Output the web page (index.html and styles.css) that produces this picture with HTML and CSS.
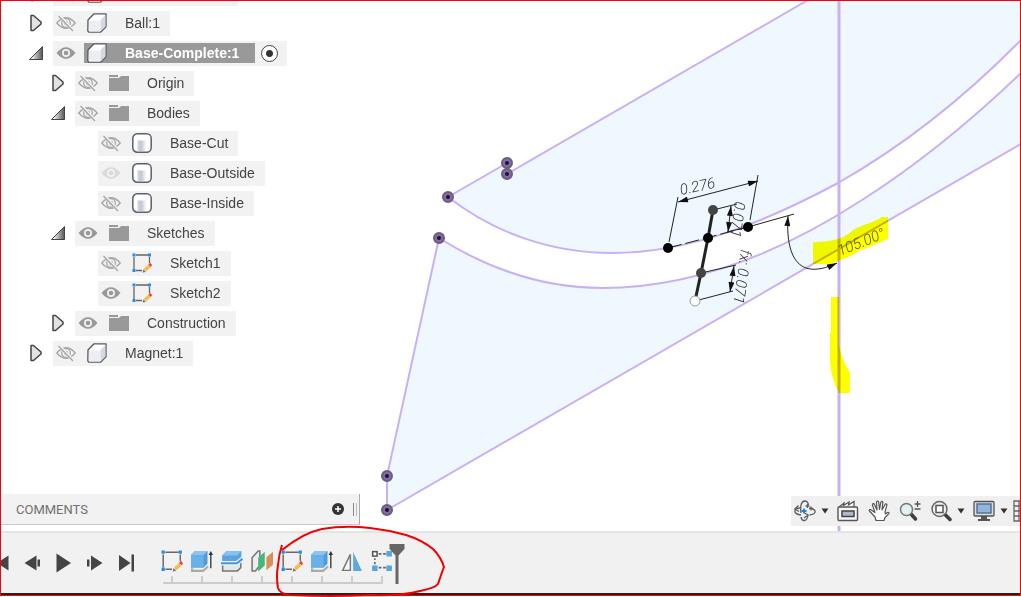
FILE: index.html
```html
<!DOCTYPE html>
<html lang="en">
<head>
    <meta charset="UTF-8">
    <meta name="viewport" content="width=device-width, initial-scale=1.0">
    <title>Base-Complete</title>
    <link rel="stylesheet" href="styles.css">
</head>
<body>
    <!-- Icon library -->
    <svg class="icon-defs" aria-hidden="true">
        <defs>
            <linearGradient id="gradArrow" x1="0" y1="0" x2="1" y2="0">
                <stop offset="0.2" stop-color="#eeeeee"/>
                <stop offset="1" stop-color="#555555"/>
            </linearGradient>
            <linearGradient id="gradBody" x1="0" y1="0" x2="1" y2="0">
                <stop offset="0" stop-color="#d4d7de"/>
                <stop offset="0.4" stop-color="#c2c6d0"/>
                <stop offset="1" stop-color="#ffffff"/>
            </linearGradient>
            <marker id="arrow" viewBox="0 0 10 6" refX="10" refY="3" markerWidth="11" markerHeight="6" markerUnits="userSpaceOnUse" orient="auto-start-reverse">
                <path d="M0 0L10 3L0 6z"/>
            </marker>
        </defs>
        <symbol id="closed" viewBox="0 0 20 20">
            <path d="M5 2.5h2.5l7.500 6.500v2l-7.500 6.500H5z" fill="#e2e2e2" stroke="#444" stroke-width="1.500" stroke-linejoin="round"/>
        </symbol>
        <symbol id="open" viewBox="0 0 20 20">
            <path d="M3.500 16.500L16.500 3.500v13z" fill="url(#gradArrow)" stroke="#444" stroke-linejoin="round"/>
        </symbol>
        <symbol id="eye" viewBox="0 0 20 20">
            <path d="M.5 10Q10-1.500 19.500 10Q10 21.500.5 10z" fill="currentColor"/>
            <circle cx="10" cy="10" r="4" fill="#f2f2f2"/>
            <circle cx="10" cy="10" r="2.300" fill="currentColor"/>
        </symbol>
        <symbol id="eye-off" viewBox="0 0 20 20">
            <g fill="none" stroke="#a6a6a6" stroke-width="1.300">
                <path d="M.8 10Q10-.5 19.200 10Q10 20.500.8 10z"/>
                <circle cx="10" cy="10" r="4.300"/>
                <circle cx="10" cy="10" r="1.500"/>
                <path d="M3.500 3L17.500 18" stroke="#f2f2f2" stroke-width="3"/>
                <path d="M2.500 3L17 18"/>
            </g>
        </symbol>
        <symbol id="cube" viewBox="0 0 20 20">
            <path d="M1 7L7 .8h12v13L13.500 19.200H2L.8 18z" fill="#fff" stroke="#555a64" stroke-width="1.300" stroke-linejoin="round"/>
            <path d="M13.500 7L18.300 2v11.500l-4.800 5z" fill="#d6d8df"/>
            <path d="M2 7.500h11v11H2z" fill="#eceef3"/>
        </symbol>
        <symbol id="body" viewBox="0 0 20 20">
            <rect x=".8" y=".8" width="18.400" height="18.400" rx="4.500" fill="#fff" stroke="#5a6070" stroke-width="1.500"/>
            <path d="M5.500 7q4.500 1 9 0v11h-9z" fill="url(#gradBody)"/>
        </symbol>
        <symbol id="folder" viewBox="0 0 20 20">
            <path d="M0 2h9v2H0zM0 5h10l2-2h8v15H0z" fill="#999"/>
        </symbol>
        <symbol id="sketch" viewBox="0 0 20 20">
            <path d="M4 2h12M2 4v12M17.500 4v6M4 17.500h6" fill="none" stroke="#666" stroke-width="1.300"/>
            <path d="M.5.5h3v3h-3zM16 .5h3v3h-3zM.5 16h3v3h-3z" fill="#1f8fe5"/>
            <path d="M10.500 19.500l1-3.200 2.400 2.600z" fill="#777"/>
            <path d="M11.800 15.800l4.500-4 2.300 2.500-4.500 4.200z" fill="#f6bd4b"/>
            <path d="M16.800 11.500l1.400-1.300 1.600 2.100-1.200 1.300z" fill="#ee3b3b" stroke="#ee3b3b" stroke-width=".7"/>
        </symbol>
        <symbol id="extrude" viewBox="0 0 20 20">
            <path d="M1 16.500V19h10l4.500-4" fill="none" stroke="#aaa" stroke-width="2"/>
            <path d="M0 4.500L3.500 1H15v11.500l-3.500 3.500H0z" fill="#4f9cd8"/>
            <path d="M0 4.500h11.500V16H0z" fill="#69b1e8"/>
            <path d="M0 4.500L3.500 1H15l-3.500 3.500z" fill="#8cc6f0"/>
            <path d="M18 3v13.500" stroke="#444" stroke-width="1.300"/>
            <path d="M16 4.500l2-3.500 2 3.500z" fill="#333"/>
        </symbol>
        <symbol id="split" viewBox="0 0 20 20">
            <path d="M1.500 13v6h13.500l3-3v-5" fill="#e7e7e7" stroke="#777" stroke-width="1.400"/>
            <path d="M1 5l4-4h13.500v6L15 10H1z" fill="#5aa5dd"/>
            <path d="M1 5l4-4h13.500L14.500 5z" fill="#87c2ee"/>
            <path d="M0 12h14.500l5-4" fill="none" stroke="#f1f1f1" stroke-width="4"/>
            <path d="M0 12h14.500l5-4" fill="none" stroke="#3f97da" stroke-width="1.800"/>
        </symbol>
        <symbol id="plane" viewBox="0 0 20 20">
            <path d="M1 7l5.500-6H8v13l-4 5H1z" fill="#eee" stroke="#777" stroke-width="1.400"/>
            <path d="M6.500 7l6-5.500V14l-6 5.500z" fill="#45b878"/>
            <path d="M14 6.500l6-5V13.500l-6 5z" fill="#dc8e59"/>
        </symbol>
        <symbol id="mirror" viewBox="0 0 20 20">
            <path d="M8.500 4v14.500H1.500z" fill="#f7f7f7" stroke="#777" stroke-width="1.300"/>
            <path d="M11 1.500L19 19h-8z" fill="#5da9df"/>
        </symbol>
        <symbol id="pattern" viewBox="0 0 20 20">
            <path d="M7 3.500h2.500M11 3.500h2.500M3.500 7.500V9M3.500 11v2M7 16h2.500M11 16h2.500" stroke="#666" stroke-width="1.500" fill="none"/>
            <rect x="1.500" y="1.500" width="4" height="4" fill="#fff" stroke="#555" stroke-width="1.400"/>
            <path d="M14 1h5v5h-5zM1 14h5v5H1zM14 14h5v5h-5z" fill="#55a6df"/>
        </symbol>
        <symbol id="orbit" viewBox="0 0 22 22">
            <g fill="none" stroke="#5a5f66" stroke-width="1.300">
                <path d="M7 15C-1 14-1 8 6 8M15.500 8c8 1.500 7 6 0 7"/>
                <path d="M7 13C6 5 7.500 1 11 1c2 0 3 1.500 3.500 4M14 15c-1 7-6 7-7 2"/>
                <path d="M11.500 6h4M13.500 4v4M15 8.500h4M17 6.500v4M4.500 5.500L1 9l4 2.500M10 12.500l4 2.500-4 3"/>
            </g>
            <path d="M7.500 11h5M10 8.500v5" stroke="#1684e2" stroke-width="1.800"/>
        </symbol>
        <symbol id="look" viewBox="0 0 22 22">
            <path d="M2 7L7 3l-.5 2.500L12 2l-.5 3L17 1.500V7" fill="#fff" stroke="#555" stroke-width="1.300"/>
            <rect x="1" y="7" width="19.500" height="13.500" rx="1" fill="#f7f7f7" stroke="#555" stroke-width="1.400"/>
            <rect x="5" y="11" width="12" height="5.500" fill="#aeb8c7" stroke="#444" stroke-width="1.500"/>
        </symbol>
        <symbol id="hand" viewBox="0 0 22 22">
            <path d="M8 20.500L7 17 1.500 11c-.8-1.300.8-2 1.800-1L7 12.500 4.500 5C4.300 3.500 6 3 6.500 4.500L9 10 8.500 2.500c0-1.800 2-1.800 2.200 0l.8 7 1.300-7c.3-1.600 2.200-1.300 2 .3L14 10l3-5.500c.7-1.300 2.300-.5 1.800.8L17 12l.5 2 2-1.500c1-.6 2 .3 1.200 1.300L17 17.500l-1 3z" fill="#fff" stroke="#555" stroke-width="1.200" stroke-linejoin="round"/>
        </symbol>
        <symbol id="zoom" viewBox="0 0 22 22">
            <path d="M12 14l4.500 5" stroke="#3c3f44" stroke-width="3.500" stroke-linecap="round"/>
            <circle cx="7.500" cy="9.500" r="6" fill="#e3f1f2" stroke="#777" stroke-width="1.500"/>
            <path d="M15.500 4h6M18.500 1v6M15.500 9h6" stroke="#555" stroke-width="1.300"/>
        </symbol>
        <symbol id="zoom-window" viewBox="0 0 22 22">
            <path d="M15 14.500l5 5" stroke="#3c3f44" stroke-width="3.500" stroke-linecap="round"/>
            <circle cx="9.500" cy="9" r="7.500" fill="#eee" stroke="#666" stroke-width="1.500"/>
            <rect x="6" y="5.500" width="7" height="7" fill="#fff" stroke="#555" stroke-width="1.500"/>
        </symbol>
        <symbol id="display" viewBox="0 0 22 22">
            <path d="M8 16h6v3h3v2H5v-2h3z" fill="#555"/>
            <rect x="1" y="1.500" width="20" height="14.500" rx="1" fill="#ddd" stroke="#555" stroke-width="1.300"/>
            <rect x="4" y="4" width="14" height="9" fill="#91b5dd" stroke="#4f6c97" stroke-width="1.400"/>
        </symbol>
        <symbol id="grid" viewBox="0 0 22 22">
            <path d="M1 1h20v20H1zM1 6h20M1 11h20M1 16h20M6 1v20M11 1v20M16 1v20" fill="none" stroke="#666" stroke-width="1.300"/>
        </symbol>
        <symbol id="caret" viewBox="0 0 8 6">
            <path d="M.5.5h7L4 5.500z" fill="#333"/>
        </symbol>
        <symbol id="first" viewBox="0 0 20 20">
            <path d="M2 2h2v16H2zM16.500 2.500v15L5 10z" fill="#444"/>
        </symbol>
        <symbol id="prev" viewBox="0 0 20 20">
            <path d="M13.500 2.500v15L1.500 10zM14.500 6.500H17v7h-2.500z" fill="#444"/>
        </symbol>
        <symbol id="play" viewBox="0 0 20 20">
            <path d="M2.500.5L17 10L2.500 19.500z" fill="#444"/>
        </symbol>
        <symbol id="next" viewBox="0 0 20 20">
            <path d="M6 2.500v15L17.500 10zM2 6.500h2.500v7H2z" fill="#444"/>
        </symbol>
        <symbol id="last" viewBox="0 0 20 20">
            <path d="M3 2v16l11.500-8zM15.500 1.500H18v17h-2.500z" fill="#444"/>
        </symbol>
    </svg>

    <main class="workspace">
        <!-- Sketch canvas -->
        <svg class="canvas" role="img" aria-label="Sketch2">
            <g class="profile">
                <path d="M448 197L507 163V174L808 0H1400V-300L1021 40C965 97 905 145 838 183C765 222 690 253 612 253C550 253 493 232 448 197z"/>
                <path d="M439 238C490 270 543 288 602 288C698 288 785 250 862 200C925 160 975 117 1021 73L1400 -300V-75L387 510V476z"/>
            </g>
            <g class="curve">
                <path d="M448 197L507 163M507 174L808 0"/>
                <path d="M448 197C493 232 550 253 612 253C690 253 765 222 838 183C905 145 965 97 1021 40L1400 -300"/>
                <path d="M387 510V476L439 238C490 270 543 288 602 288C698 288 785 250 862 200C925 160 975 117 1021 73L1400 -300"/>
                <path d="M387 510L1400 -75"/>
                <path class="axis" d="M839 0V540"/>
            </g>
            <g class="vertex">
                <circle cx="507" cy="163" r="5"/>
                <circle cx="507" cy="174" r="5"/>
                <circle cx="448" cy="197" r="5"/>
                <circle cx="439" cy="238" r="5"/>
                <circle cx="387" cy="476" r="5"/>
                <circle cx="387" cy="510" r="5"/>
            </g>
            <g class="vertex-core">
                <circle cx="507" cy="163" r="2"/>
                <circle cx="507" cy="174" r="2"/>
                <circle cx="448" cy="197" r="2"/>
                <circle cx="439" cy="238" r="2"/>
                <circle cx="387" cy="476" r="2"/>
                <circle cx="387" cy="510" r="2"/>
            </g>
            <g class="dimension">
                <path d="M669 242L678 197M750 220L758 175M748 227L794 214M713 210L737 204M727 232L748 227M701 273L736 265M695 301L733 291"/>
                <path class="dashed" d="M668 248L748 227"/>
                <path class="measure" d="M678 202L758 181"/>
                <path class="measure" d="M731 206L728 232"/>
                <path class="measure" d="M734 266L730 292"/>
                <path class="measure" d="M788 216C786 248 793 284 837 263"/>
                <path class="bar" d="M713 210L708 238L701 273L695 301"/>
            </g>
            <g class="node">
                <circle cx="668" cy="248" r="5"/>
                <circle cx="708" cy="238" r="5"/>
                <circle cx="748" cy="227" r="5"/>
                <circle class="soft" cx="713" cy="210" r="5"/>
                <circle class="soft" cx="701" cy="273" r="5"/>
                <circle class="hollow" cx="695" cy="301" r="5"/>
            </g>
            <g class="value">
                <text transform="translate(681 195) rotate(-12)">0.276</text>
                <text transform="translate(735 201) rotate(98)">0.071</text>
                <text transform="translate(741 249) rotate(98)">fx: 0.071</text>
                <text class="angle" transform="translate(840 256) rotate(-22)">105.00°</text>
            </g>
            <g class="highlighter">
                <path d="M813 242Q828 242 838 239Q847 236 853 230L861 226Q874 222 882 217H888V239L857 252Q850 257 838 261L830 264H813z"/>
                <path d="M831 297H839V345Q842 360 850 373V393H839Q831 378 830 362V333H831z"/>
            </g>
        </svg>

        <!-- Browser tree -->
        <nav class="browser" aria-label="Browser">
            <ul class="tree">
                <li>
                    <div class="row">
                        <button class="toggle" aria-label="Expand"><svg><use href="#closed"/></svg></button>
                        <div class="node-box">
                            <button class="eye" aria-label="Show"><svg><use href="#eye-off"/></svg></button>
                            <span class="entry entry-empty"><svg><use href="#cube"/></svg></span>
                        </div>
                    </div>
                </li>
                <li>
                    <div class="row">
                        <button class="toggle" aria-label="Expand"><svg><use href="#closed"/></svg></button>
                        <div class="node-box">
                            <button class="eye" aria-label="Show"><svg><use href="#eye-off"/></svg></button>
                            <span class="entry"><svg><use href="#cube"/></svg>Ball:1</span>
                        </div>
                    </div>
                </li>
                <li>
                    <div class="row">
                        <button class="toggle" aria-label="Collapse"><svg><use href="#open"/></svg></button>
                        <div class="node-box">
                            <button class="eye" aria-label="Hide"><svg><use href="#eye"/></svg></button>
                            <span class="entry active"><svg><use href="#cube"/></svg>Base-Complete:1</span>
                            <input class="activate" type="radio" name="component" aria-label="Activate Base-Complete:1" checked>
                        </div>
                    </div>
                    <ul>
                        <li>
                            <div class="row">
                                <button class="toggle" aria-label="Expand"><svg><use href="#closed"/></svg></button>
                                <div class="node-box">
                                    <button class="eye" aria-label="Show"><svg><use href="#eye-off"/></svg></button>
                                    <span class="entry"><svg><use href="#folder"/></svg>Origin</span>
                                </div>
                            </div>
                        </li>
                        <li>
                            <div class="row">
                                <button class="toggle" aria-label="Collapse"><svg><use href="#open"/></svg></button>
                                <div class="node-box">
                                    <button class="eye" aria-label="Show"><svg><use href="#eye-off"/></svg></button>
                                    <span class="entry"><svg><use href="#folder"/></svg>Bodies</span>
                                </div>
                            </div>
                            <ul>
                                <li>
                                    <div class="row leaf">
                                        <div class="node-box">
                                            <button class="eye" aria-label="Show"><svg><use href="#eye-off"/></svg></button>
                                            <span class="entry"><svg><use href="#body"/></svg>Base-Cut</span>
                                        </div>
                                    </div>
                                </li>
                                <li>
                                    <div class="row leaf">
                                        <div class="node-box">
                                            <button class="eye faded" aria-label="Hide"><svg><use href="#eye"/></svg></button>
                                            <span class="entry"><svg><use href="#body"/></svg>Base-Outside</span>
                                        </div>
                                    </div>
                                </li>
                                <li>
                                    <div class="row leaf">
                                        <div class="node-box">
                                            <button class="eye" aria-label="Show"><svg><use href="#eye-off"/></svg></button>
                                            <span class="entry"><svg><use href="#body"/></svg>Base-Inside</span>
                                        </div>
                                    </div>
                                </li>
                            </ul>
                        </li>
                        <li>
                            <div class="row">
                                <button class="toggle" aria-label="Collapse"><svg><use href="#open"/></svg></button>
                                <div class="node-box">
                                    <button class="eye" aria-label="Hide"><svg><use href="#eye"/></svg></button>
                                    <span class="entry"><svg><use href="#folder"/></svg>Sketches</span>
                                </div>
                            </div>
                            <ul>
                                <li>
                                    <div class="row leaf">
                                        <div class="node-box">
                                            <button class="eye" aria-label="Show"><svg><use href="#eye-off"/></svg></button>
                                            <span class="entry"><svg><use href="#sketch"/></svg>Sketch1</span>
                                        </div>
                                    </div>
                                </li>
                                <li>
                                    <div class="row leaf">
                                        <div class="node-box">
                                            <button class="eye" aria-label="Hide"><svg><use href="#eye"/></svg></button>
                                            <span class="entry"><svg><use href="#sketch"/></svg>Sketch2</span>
                                        </div>
                                    </div>
                                </li>
                            </ul>
                        </li>
                        <li>
                            <div class="row">
                                <button class="toggle" aria-label="Expand"><svg><use href="#closed"/></svg></button>
                                <div class="node-box">
                                    <button class="eye" aria-label="Hide"><svg><use href="#eye"/></svg></button>
                                    <span class="entry"><svg><use href="#folder"/></svg>Construction</span>
                                </div>
                            </div>
                        </li>
                    </ul>
                </li>
                <li>
                    <div class="row">
                        <button class="toggle" aria-label="Expand"><svg><use href="#closed"/></svg></button>
                        <div class="node-box">
                            <button class="eye" aria-label="Show"><svg><use href="#eye-off"/></svg></button>
                            <span class="entry"><svg><use href="#cube"/></svg>Magnet:1</span>
                        </div>
                    </div>
                </li>
            </ul>
        </nav>

        <div class="bottom-bar">
            <section class="comments">
                <h2>COMMENTS</h2>
                <button class="add" aria-label="Add comment">
                    <svg viewBox="0 0 12 12"><circle cx="6" cy="6" r="6" fill="#333"/><path d="M6 3v6M3 6h6" stroke="#fff" stroke-width="1.500"/></svg>
                </button>
                <span class="grip"></span>
            </section>
            <div class="navigation" role="toolbar" aria-label="Navigation">
                <div class="tool-group">
                    <button class="tool" aria-label="Orbit"><svg><use href="#orbit"/></svg></button>
                    <button class="more" aria-label="Orbit options"><svg><use href="#caret"/></svg></button>
                </div>
                <button class="tool" aria-label="Look at"><svg><use href="#look"/></svg></button>
                <button class="tool" aria-label="Pan"><svg><use href="#hand"/></svg></button>
                <button class="tool" aria-label="Zoom"><svg><use href="#zoom"/></svg></button>
                <div class="tool-group">
                    <button class="tool" aria-label="Zoom window"><svg><use href="#zoom-window"/></svg></button>
                    <button class="more" aria-label="Zoom options"><svg><use href="#caret"/></svg></button>
                </div>
                <div class="tool-group">
                    <button class="tool" aria-label="Display settings"><svg><use href="#display"/></svg></button>
                    <button class="more" aria-label="Display options"><svg><use href="#caret"/></svg></button>
                </div>
                <button class="tool cut" aria-label="Grid"><svg><use href="#grid"/></svg></button>
            </div>
        </div>
    </main>

    <!-- Timeline -->
    <footer class="timeline">
        <div class="playback">
            <button aria-label="Go to start"><svg><use href="#first"/></svg></button>
            <button aria-label="Step back"><svg><use href="#prev"/></svg></button>
            <button aria-label="Play"><svg><use href="#play"/></svg></button>
            <button aria-label="Step forward"><svg><use href="#next"/></svg></button>
            <button aria-label="Go to end"><svg><use href="#last"/></svg></button>
        </div>
        <ol class="features">
            <li><button aria-label="Sketch"><svg><use href="#sketch"/></svg></button></li>
            <li><button aria-label="Extrude"><svg><use href="#extrude"/></svg></button></li>
            <li><button aria-label="Split body"><svg><use href="#split"/></svg></button></li>
            <li><button aria-label="Plane"><svg><use href="#plane"/></svg></button></li>
            <li><button aria-label="Sketch"><svg><use href="#sketch"/></svg></button></li>
            <li><button aria-label="Extrude"><svg><use href="#extrude"/></svg></button></li>
            <li><button aria-label="Mirror"><svg><use href="#mirror"/></svg></button></li>
            <li><button aria-label="Pattern"><svg><use href="#pattern"/></svg></button></li>
        </ol>
        <svg class="marker" viewBox="0 0 16 40"><path d="M.5 0h15v5L9.500 11.500V40h-3V11.500L.5 5z" fill="#666"/></svg>
    </footer>

    <!-- Red markup -->
    <div class="frame"></div>
    <svg class="loop" viewBox="0 0 190 77">
        <path d="M12 25Q9 34 8 45Q6 57 8 68Q10 74 20 75Q60 77 100 75Q133 76 150 71Q165 68 168 64L170 58Q172 52 174 47Q171 37 163 29Q152 20 136 15Q118 10 100 8Q75 5 52 9Q33 13 12 30"/>
    </svg>
</body>
</html>
```

FILE: styles.css
```css
* {
    box-sizing: border-box;
}
body {
    margin: 0;
    height: 100vh;
    padding-bottom: 2px;
    display: flex;
    flex-direction: column;
    position: relative;
    overflow: hidden;
    background-color: #ffffff;
    color: #444444;
    font-family: "Liberation Sans", Arial, sans-serif;
    font-size: 14px;
}
button {
    display: flex;
    align-items: center;
    justify-content: center;
    flex: none;
    padding: 0;
    border: 0;
    background: none;
    cursor: pointer;
}
ul, ol {
    list-style: none;
    margin: 0;
    padding: 0;
}
.icon-defs {
    position: absolute;
    width: 0;
    height: 0;
}
.workspace {
    flex: 1;
    min-height: 0;
    display: flex;
    flex-direction: column;
    justify-content: space-between;
    position: relative;
    overflow: hidden;
}

/* Canvas */
.canvas {
    position: absolute;
    top: 0;
    left: 0;
    width: 100%;
    height: 100%;
}
.profile {
    fill: #f0f8ff;
}
.curve {
    fill: none;
    stroke: #c8b0f6;
    stroke-width: 2;
}
.axis {
    stroke-width: 3;
}
.vertex {
    fill: #8966b5;
    stroke: #666270;
    stroke-width: 2;
}
.vertex-core {
    fill: #1c1426;
}
.dimension {
    fill: none;
    stroke: #222222;
    stroke-width: 1;
}
#arrow path {
    fill: #111111;
    stroke: none;
}
.dashed {
    stroke-dasharray: 14 4;
}
.measure {
    marker-start: url(#arrow);
    marker-end: url(#arrow);
}
.dimension .bar {
    stroke: #222222;
    stroke-width: 3;
}
.node .soft {
    fill: #444444;
}
.node .hollow {
    fill: #ffffff;
    stroke: #999999;
    stroke-width: 1;
}
.value {
    font-family: Roboto, sans-serif;
    font-size: 15px;
    font-style: italic;
    font-weight: 300;
    fill: #333333;
}
.value .angle {
    fill: #555555;
}
.highlighter {
    fill: #ffff00;
    mix-blend-mode: multiply;
}

/* Browser tree */
.browser {
    position: relative;
    align-self: flex-start;
    padding-left: 25px;
}
.tree {
    margin-top: -22px;
}
.tree ul {
    padding-left: 22px;
}
.row {
    display: flex;
    align-items: center;
    height: 30px;
}
.leaf {
    padding-left: 29px;
}
.toggle {
    width: 22px;
    height: 20px;
    margin-right: 6px;
}
.toggle svg, .eye svg, .entry svg {
    width: 20px;
    height: 20px;
}
.node-box {
    display: flex;
    align-items: center;
    height: 25px;
    padding-left: 3px;
    background-color: #f2f2f2;
}
.eye {
    width: 20px;
    color: #999999;
}
.faded {
    color: #dadada;
}
.entry {
    display: flex;
    align-items: center;
    gap: 18px;
    height: 20px;
    margin-left: 8px;
    padding: 0 10px 0 3px;
    white-space: nowrap;
}
.entry-empty {
    width: 154px;
}
.active {
    padding-right: 16px;
    background-color: #999999;
    color: #ffffff;
    font-weight: bold;
}
.activate {
    appearance: none;
    width: 17px;
    height: 17px;
    margin: 0 9px 0 6px;
    border: 1px solid #444444;
    border-radius: 50%;
    background: radial-gradient(circle, #333333 3px, #ffffff 4px);
}

/* Comments and navigation */
.bottom-bar {
    display: flex;
    align-items: flex-start;
    justify-content: space-between;
    position: relative;
    height: 37px;
}
.comments {
    display: flex;
    align-items: center;
    width: 360px;
    height: 31px;
    padding: 0 2px 0 16px;
    background-color: #f2f2f2;
    border-right: 1px solid #aaaaaa;
    border-bottom: 1px solid #c8c8c8;
}
.comments h2 {
    flex: 1;
    margin: 0;
    font-family: Roboto, sans-serif;
    font-size: 13px;
    font-weight: normal;
    color: #707070;
}
.add svg {
    width: 12px;
    height: 12px;
}
.grip {
    width: 4px;
    height: 13px;
    margin-left: 9px;
    border-left: 1px solid #888888;
    border-right: 1px solid #bbbbbb;
}
.navigation {
    display: flex;
    align-items: center;
    gap: 3px;
    height: 30px;
    margin-top: 2px;
    background-color: #f0f0f0;
}
.tool-group {
    display: flex;
    align-items: center;
}
.tool {
    width: 28px;
    height: 30px;
}
.tool svg {
    flex: none;
    width: 22px;
    height: 22px;
}
.more {
    width: 12px;
    height: 30px;
}
.more svg {
    width: 8px;
    height: 6px;
}
.cut {
    justify-content: flex-start;
    width: 8px;
    overflow: hidden;
}

/* Timeline */
.timeline {
    display: flex;
    align-items: center;
    height: 64px;
    background-color: #f1f1f1;
    border-top: 2px solid #e4e4e4;
    border-bottom: 2px solid #222222;
    overflow: hidden;
}
.playback {
    display: flex;
    margin-left: -14px;
    margin-right: 16px;
}
.playback button {
    width: 31px;
    height: 30px;
}
.playback svg {
    width: 20px;
    height: 20px;
}
.features {
    display: flex;
    align-self: flex-end;
    height: 38px;
    margin-bottom: 9px;
    background: linear-gradient(#cccccc, #cccccc) 6px bottom / calc(100% - 20px) 2px no-repeat;
}
.features li {
    width: 30px;
}
.features li::after {
    content: "";
    display: block;
    width: 2px;
    height: 8px;
    margin: 0 auto;
    background-color: #cccccc;
}
.features button {
    width: 30px;
    height: 30px;
}
.features svg {
    width: 22px;
    height: 22px;
}
.marker {
    align-self: flex-end;
    width: 16px;
    height: 40px;
    margin-left: -8px;
    margin-bottom: 9px;
}

/* Red markup */
.frame {
    position: absolute;
    top: 0;
    right: 0;
    bottom: 1px;
    left: 0;
    border: 1px solid #ff0000;
    pointer-events: none;
}
.loop {
    position: absolute;
    left: 270px;
    bottom: 0;
    width: 190px;
    height: 77px;
    fill: none;
    stroke: #f00000;
    stroke-width: 2;
    stroke-linejoin: round;
    pointer-events: none;
}
```
